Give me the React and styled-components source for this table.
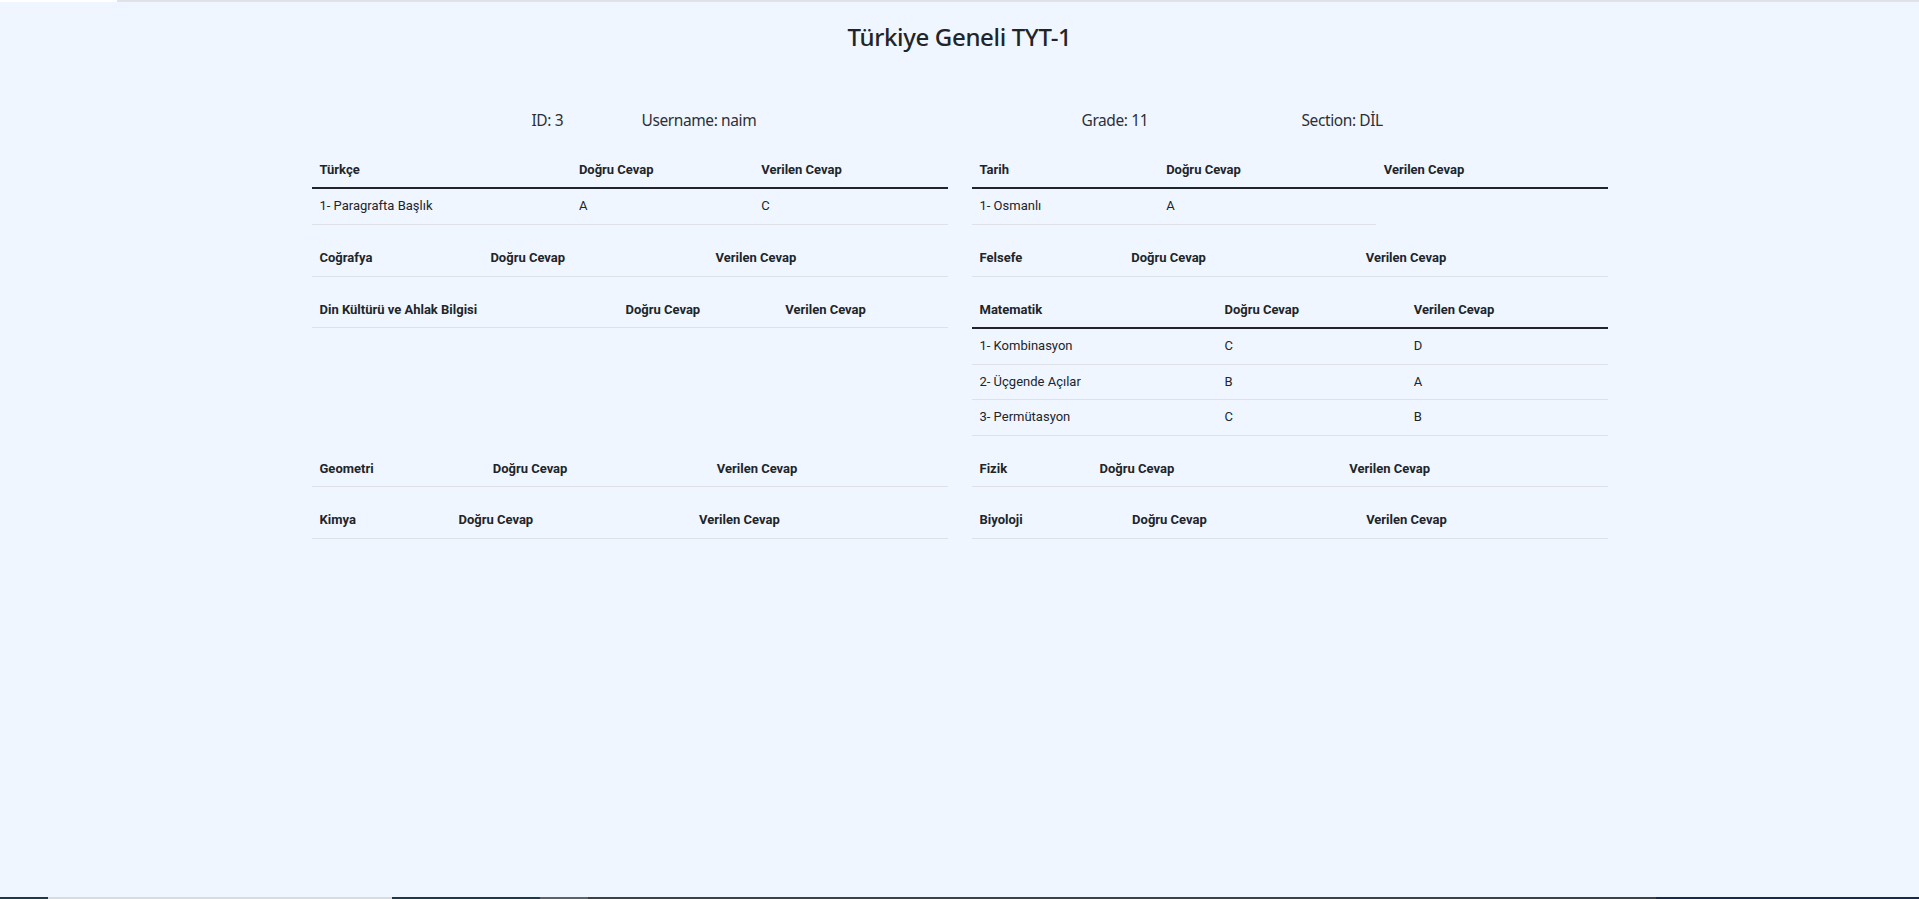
import React from "react";
import styled, { createGlobalStyle } from "styled-components";

const GlobalStyle = createGlobalStyle`
  html, body {
    margin: 0;
    padding: 0;
    background: #f0f6ff;
    color: #212529;
    font-family: "Noto Sans", "Open Sans", sans-serif;
  }
  * { box-sizing: border-box; }
`;

const Page = styled.div`
  min-height: 100vh;
  display: flex;
  flex-direction: column;
`;

const Strip = styled.div`
  display: flex;
  height: 2px;
  flex-shrink: 0;
`;

const StripPart = styled.div`
  width: ${(p) => (p.$w ? `${p.$w}px` : "auto")};
  flex: ${(p) => (p.$w ? "0 0 auto" : "1 1 auto")};
  background: ${(p) => p.$color};
`;

const Container = styled.main`
  width: 1296px;
  margin: 0 auto;
  flex: 1 0 auto;
`;

const Title = styled.h4`
  margin: 21px 0 0;
  text-align: center;
  font-size: 24px;
  font-weight: 500;
  line-height: 1.2;
  letter-spacing: -0.35px;
  color: #212529;
`;

const InfoRow = styled.div`
  display: grid;
  grid-template-columns: 110px 440px 220px auto;
  padding-left: 220px;
  margin-top: 56px;
  font-size: 15.5px;
  letter-spacing: -0.4px;
  line-height: 24px;
  color: #2b3035;
`;

const InfoItem = styled.span``;

const Grid = styled.div`
  display: grid;
  grid-template-columns: 1fr 1fr;
  column-gap: 24px;
  row-gap: 16px;
  align-items: start;
  margin-top: 21px;
`;

const Table = styled.table`
  width: 100%;
  border-collapse: collapse;
  font-family: Roboto, "Liberation Sans", sans-serif;
  font-size: 13px;
  line-height: 1.43;
  color: #212529;
`;

const Body = styled.tbody`
  border-top: 2px solid #212529;
`;

const Th = styled.th`
  text-align: left;
  font-weight: 700;
  padding: 8px;
  border-bottom: 1px solid #dee2e6;
`;

const Td = styled.td`
  padding: 8px;
  border-bottom: 1px solid #dee2e6;
`;

const lessons = [
  { name: "Türkçe", rows: [["1- Paragrafta Başlık", "A", "C"]] },
  { name: "Tarih", rows: [["1- Osmanlı", "A"]] },
  { name: "Coğrafya", rows: [] },
  { name: "Felsefe", rows: [] },
  { name: "Din Kültürü ve Ahlak Bilgisi", rows: [] },
  {
    name: "Matematik",
    rows: [
      ["1- Kombinasyon", "C", "D"],
      ["2- Üçgende Açılar", "B", "A"],
      ["3- Permütasyon", "C", "B"],
    ],
  },
  { name: "Geometri", rows: [] },
  { name: "Fizik", rows: [] },
  { name: "Kimya", rows: [] },
  { name: "Biyoloji", rows: [] },
];

function LessonTable({ name, rows }) {
  return (
    <Table>
      <thead>
        <tr>
          <Th>{name}</Th>
          <Th>Doğru Cevap</Th>
          <Th>Verilen Cevap</Th>
        </tr>
      </thead>
      {rows.length > 0 && (
        <Body>
          {rows.map((r, i) => (
            <tr key={i}>
              {r.map((c, j) => (
                <Td key={j}>{c}</Td>
              ))}
            </tr>
          ))}
        </Body>
      )}
    </Table>
  );
}

export default function App() {
  return (
    <Page>
      <GlobalStyle />
      <Strip>
        <StripPart $w={117} $color="#ffffff" />
        <StripPart $color="#dfe3e8" />
      </Strip>
      <Container>
        <Title>Türkiye Geneli TYT-1</Title>
        <InfoRow>
          <InfoItem>ID: 3</InfoItem>
          <InfoItem>Username: naim</InfoItem>
          <InfoItem>Grade: 11</InfoItem>
          <InfoItem>Section: DİL</InfoItem>
        </InfoRow>
        <Grid>
          {lessons.map((l) => (
            <LessonTable key={l.name} name={l.name} rows={l.rows} />
          ))}
        </Grid>
      </Container>
      <Strip>
        <StripPart $w={48} $color="#1d3a48" />
        <StripPart $w={344} $color="#d9dcdf" />
        <StripPart $w={148} $color="#1d3a48" />
        <StripPart $w={48} $color="#5b6369" />
        <StripPart $w={1068} $color="#3e4144" />
        <StripPart $color="#182a4c" />
      </Strip>
    </Page>
  );
}
